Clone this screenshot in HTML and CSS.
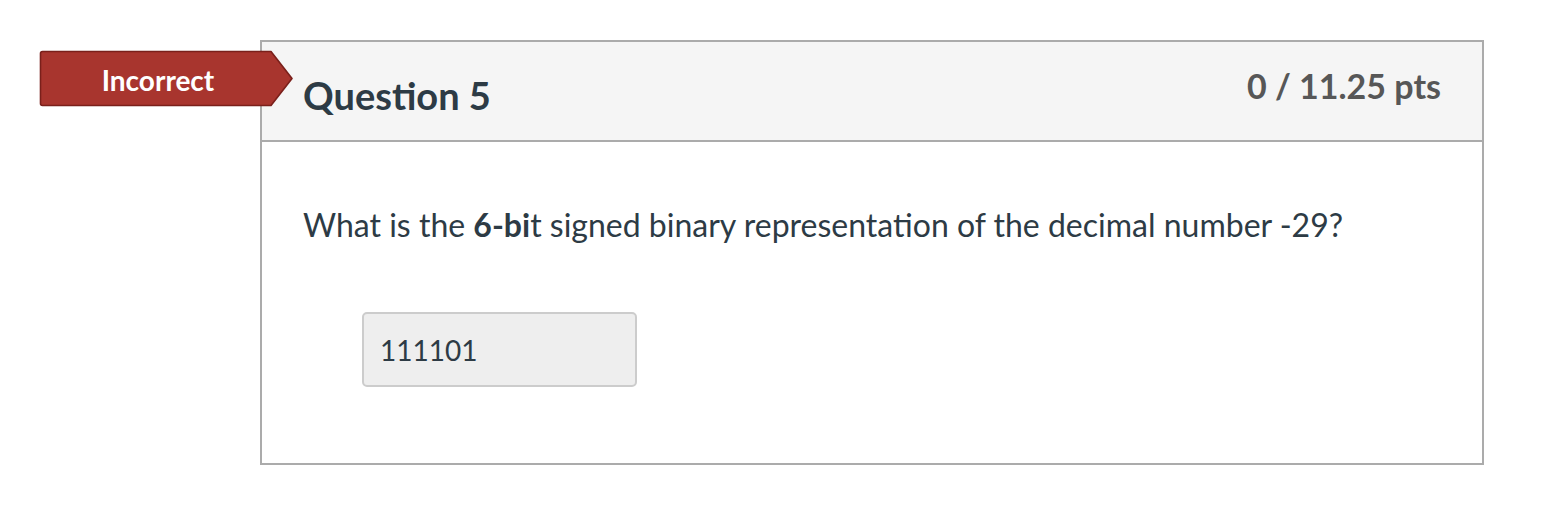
FILE: index.html
```html
<!DOCTYPE html>
<html lang="en">
<head>
<meta charset="utf-8">
<title>Question 5</title>
<link rel="stylesheet" href="styles.css">
</head>
<body>
<div class="page">
  <div class="badge">
    <svg class="badge-shape" width="256" height="57" viewBox="0 0 256 57" aria-hidden="true">
      <path d="M3.5 1.5 H232 L253 28.5 L232 55.5 H3.5 Q1.5 55.5 1.5 53.5 V3.5 Q1.5 1.5 3.5 1.5 Z" fill="#a8352e" stroke="#7a201b" stroke-width="1.6" stroke-linejoin="round"/>
    </svg>
    <span class="badge-text">Incorrect</span>
  </div>
  <div class="card">
    <div class="card-header">
      <h2 class="q-title">Question 5</h2>
      <div class="q-points">0 / 11.25 pts</div>
    </div>
    <div class="card-body">
      <p class="q-text">What is the <strong>6-bi</strong>t signed binary representation of the decimal number -29?</p>
      <div class="answer">111101</div>
    </div>
  </div>
</div>
</body>
</html>
```

FILE: styles.css
```css
html, body {
  margin: 0;
  padding: 0;
  background: #ffffff;
}
body {
  font-family: Lato, "Open Sans", "Liberation Sans", sans-serif;
  color: #2d3b45;
}
.page {
  position: relative;
  padding: 40px 0 0 260px;
}
.badge {
  position: absolute;
  left: 39px;
  top: 50px;
  width: 256px;
  height: 57px;
}
.badge-shape {
  position: absolute;
  left: 0;
  top: 0;
}
.badge-text {
  position: absolute;
  left: 2px;
  top: 1px;
  width: 234px;
  height: 57px;
  display: flex;
  align-items: center;
  justify-content: center;
  color: #ffffff;
  font-weight: 700;
  font-size: 28px;
}
.card {
  box-sizing: border-box;
  width: 1224px;
  height: 425px;
  border: 2px solid #ababab;
  display: flex;
  flex-direction: column;
}
.card-header {
  box-sizing: border-box;
  height: 100px;
  background: #f5f5f5;
  border-bottom: 2px solid #ababab;
  display: flex;
  justify-content: space-between;
  align-items: flex-start;
  padding: 23px 41px 0 41px;
}
.q-title {
  margin: 7px 0 0 0;
  font-size: 38px;
  line-height: 46px;
  font-weight: 700;
  color: #2d3b45;
}
.q-points {
  font-size: 34px;
  line-height: 41px;
  font-weight: 700;
  color: #575757;
}
.card-body {
  padding: 64px 41px 0 41px;
}
.q-text {
  margin: 0;
  font-size: 32px;
  line-height: 38px;
}
.q-text strong {
  font-weight: 700;
}
.answer {
  box-sizing: border-box;
  margin: 68px 0 0 59px;
  width: 275px;
  height: 75px;
  background: #eeeeee;
  border: 2px solid #cccccc;
  border-radius: 5px;
  padding: 0 16px;
  display: flex;
  align-items: center;
  font-size: 28px;
  color: #2d3b45;
}
```
